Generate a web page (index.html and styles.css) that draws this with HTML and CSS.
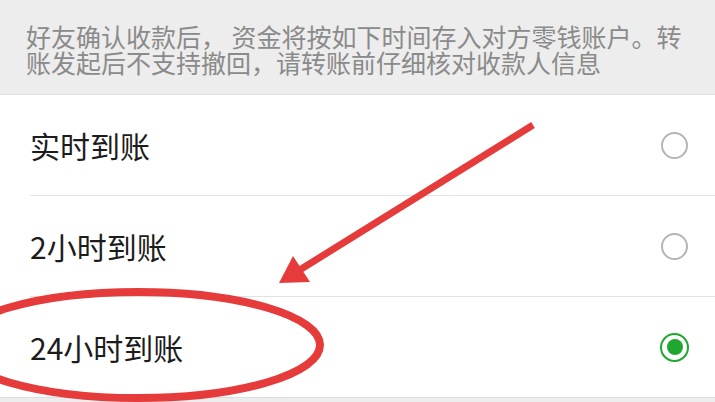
FILE: index.html
```html
<!DOCTYPE html>
<html lang="zh-CN">
<head>
<meta charset="utf-8">
<title>到账时间</title>
<link rel="stylesheet" href="styles.css">
</head>
<body>
<div class="page">
  <div class="notice">好友确认收款后， 资金将按如下时间存入对方零钱账户。转<br>账发起后不支持撤回，请转账前仔细核对收款人信息</div>
  <div class="list">
    <div class="option"><span class="label">实时到账</span><span class="radio"></span></div>
    <div class="option"><span class="label">2小时到账</span><span class="radio"></span></div>
    <div class="option"><span class="label">24小时到账</span><span class="radio checked"></span></div>
  </div>
  <svg class="annot" width="715" height="402" viewBox="0 0 715 402" aria-hidden="true">
    <line x1="533" y1="125" x2="298" y2="271" stroke="#e63b3b" stroke-width="7" stroke-linecap="butt"/>
    <polygon points="279,283 293,256 310,282" fill="#e63b3b"/>
    <ellipse cx="138" cy="345" rx="182" ry="53" fill="none" stroke="#e63b3b" stroke-width="8"/>
  </svg>
</div>
</body>
</html>
```
FILE: styles.css
```css
html, body {
  margin: 0;
  padding: 0;
  background: #ededed;
}
body {
  font-family: "Noto Sans CJK SC", "Noto Sans", sans-serif;
  width: 715px;
  height: 402px;
  overflow: hidden;
}
.page {
  position: relative;
  width: 715px;
  height: 402px;
}
.notice {
  box-sizing: border-box;
  height: 95px;
  padding: 23px 0 0 26px;
  font-size: 25px;
  line-height: 26px;
  color: #8a8a8a;
  white-space: nowrap;
  border-bottom: 1px solid #dedede;
}
.list {
  background: #fff;
  padding-left: 30px;
  border-bottom: 1px solid #dcdcdc;
}
.option {
  height: 100px;
  display: flex;
  align-items: center;
  justify-content: space-between;
  padding-right: 27px;
  border-bottom: 1px solid #e2e2e2;
}
.option:last-child {
  border-bottom: none;
}
.label {
  font-size: 30px;
  color: #1c1c1c;
}
.radio {
  box-sizing: border-box;
  width: 27px;
  height: 27px;
  border: 2px solid #b4b4b4;
  border-radius: 50%;
  display: flex;
  align-items: center;
  justify-content: center;
}
.radio.checked {
  width: 29px;
  height: 29px;
  margin-right: -1px;
  border: 2.5px solid #1fa82f;
}
.radio.checked::after {
  content: "";
  width: 16px;
  height: 16px;
  border-radius: 50%;
  background: #1fa82f;
}
.annot {
  position: absolute;
  left: 0;
  top: 0;
  pointer-events: none;
}
```
